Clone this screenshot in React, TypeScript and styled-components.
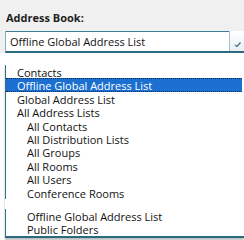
import React from 'react';
import styled, { createGlobalStyle } from 'styled-components';

const GlobalStyle = createGlobalStyle`
    html, body {
        margin: 0;
        padding: 0;
        background: #ffffff;
    }
    body {
        font-family: 'Open Sans', 'Noto Sans', sans-serif;
        font-size: 11px;
        color: #111111;
    }
`;

const Page = styled.div`
    width: 244px;
    height: 240px;
    overflow: hidden;
    background: #ffffff;
`;

const Panel = styled.div`
    background: #f0f0f0;
    padding: 11px 0 0 5px;
`;

const Label = styled.div`
    font-weight: 700;
    line-height: 14px;
    padding-left: 1px;
    color: #1e1e1e;
`;

const Combo = styled.div`
    display: flex;
    margin-top: 6px;
    height: 20px;
    border-left: 1px solid #7fb0c0;
    border-bottom: 2px solid #2c6a80;
    background: #ffffff;
`;

const Field = styled.div`
    flex: 1;
    border-top: 1px solid #3d7d92;
    padding-left: 4px;
    line-height: 19px;
    white-space: nowrap;
`;

const DropButton = styled.div`
    width: 15px;
    display: flex;
    align-items: flex-end;
    justify-content: center;
    padding-bottom: 4px;
    box-sizing: border-box;
    border-left: 1px solid #9fc3d0;
    background: linear-gradient(#ffffff, #e8f0f5);
`;

const List = styled.div`
    margin: 12px 0 0 5px;
    border-bottom: 2px solid #2c6a80;
    box-shadow: 0 2px 2px rgba(0, 0, 0, 0.28);
`;

const Section = styled.div`
    border-left: 1px solid #2f7488;
`;

const Spacer = styled.div`
    height: 10px;
`;

const Item = styled.div<{ $level: number; $selected?: boolean }>`
    height: 13.4px;
    line-height: 13px;
    box-sizing: border-box;
    white-space: nowrap;
    padding-left: ${(p) => (p.$level === 1 ? 11 : 21)}px;
    margin-right: ${(p) => (p.$selected ? 2 : 0)}px;
    background: ${(p) => (p.$selected ? '#1a6fd1' : 'transparent')};
    color: ${(p) => (p.$selected ? '#ffffff' : '#111111')};
    border-top: 1px dotted ${(p) => (p.$selected ? '#0b2f5c' : 'transparent')};
    border-bottom: 1px dotted ${(p) => (p.$selected ? '#0b2f5c' : 'transparent')};
`;

const Arrow = () => (
    <svg width="7" height="5" viewBox="0 0 7 5">
        <path d="M1 3 L3 4.5 L6.5 0.5" stroke="#4a6a80" strokeWidth="1.2" fill="none" />
    </svg>
);

const mainItems = [
    { label: 'Contacts', level: 1 },
    { label: 'Offline Global Address List', level: 1, selected: true },
    { label: 'Global Address List', level: 1 },
    { label: 'All Address Lists', level: 1 },
    { label: 'All Contacts', level: 2 },
    { label: 'All Distribution Lists', level: 2 },
    { label: 'All Groups', level: 2 },
    { label: 'All Rooms', level: 2 },
    { label: 'All Users', level: 2 },
    { label: 'Conference Rooms', level: 2 },
];

const extraItems = [
    { label: 'Offline Global Address List', level: 2 },
    { label: 'Public Folders', level: 2 },
];

export default function App() {
    return (
        <Page>
            <GlobalStyle />
            <Panel>
                <Label>Address Book:</Label>
                <Combo>
                    <Field>Offline Global Address List</Field>
                    <DropButton>
                        <Arrow />
                    </DropButton>
                </Combo>
            </Panel>
            <List>
                <Section>
                    {mainItems.map((item) => (
                        <Item key={item.label} $level={item.level} $selected={item.selected}>
                            {item.label}
                        </Item>
                    ))}
                </Section>
                <Spacer />
                <Section>
                    {extraItems.map((item) => (
                        <Item key={item.label} $level={item.level}>
                            {item.label}
                        </Item>
                    ))}
                </Section>
            </List>
        </Page>
    );
}
